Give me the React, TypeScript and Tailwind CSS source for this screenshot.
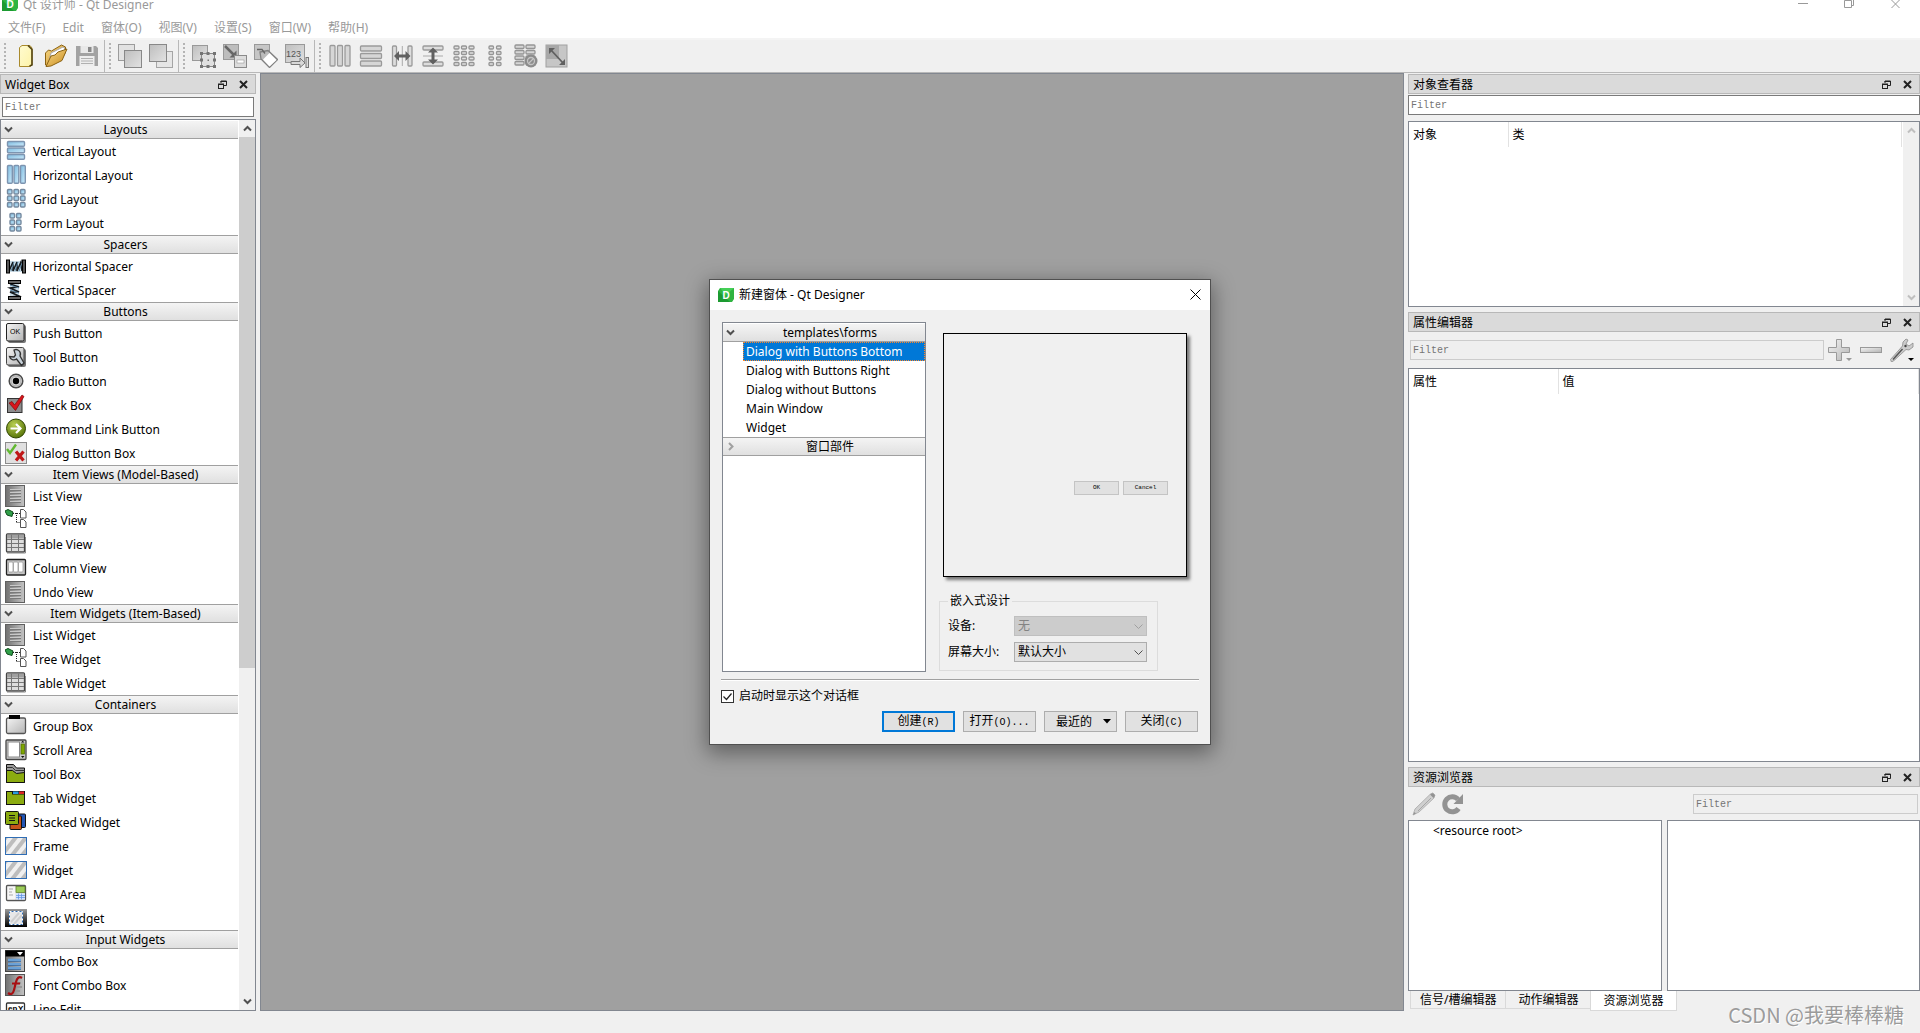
import React, { useState } from 'react';

type IconName =
  | 'vlayout' | 'hlayout' | 'grid' | 'form' | 'hspacer' | 'vspacer'
  | 'push' | 'tool' | 'radio' | 'check' | 'command' | 'dialogbox'
  | 'list' | 'tree' | 'table' | 'column'
  | 'group' | 'scroll' | 'toolbox' | 'tab' | 'stacked' | 'frame' | 'mdi' | 'dock'
  | 'combo' | 'fontcombo' | 'lineedit';

interface Section {
  title: string;
  items: { label: string; icon: IconName }[];
}

const sections: Section[] = [
  {
    title: 'Layouts',
    items: [
      { label: 'Vertical Layout', icon: 'vlayout' },
      { label: 'Horizontal Layout', icon: 'hlayout' },
      { label: 'Grid Layout', icon: 'grid' },
      { label: 'Form Layout', icon: 'form' },
    ],
  },
  {
    title: 'Spacers',
    items: [
      { label: 'Horizontal Spacer', icon: 'hspacer' },
      { label: 'Vertical Spacer', icon: 'vspacer' },
    ],
  },
  {
    title: 'Buttons',
    items: [
      { label: 'Push Button', icon: 'push' },
      { label: 'Tool Button', icon: 'tool' },
      { label: 'Radio Button', icon: 'radio' },
      { label: 'Check Box', icon: 'check' },
      { label: 'Command Link Button', icon: 'command' },
      { label: 'Dialog Button Box', icon: 'dialogbox' },
    ],
  },
  {
    title: 'Item Views (Model-Based)',
    items: [
      { label: 'List View', icon: 'list' },
      { label: 'Tree View', icon: 'tree' },
      { label: 'Table View', icon: 'table' },
      { label: 'Column View', icon: 'column' },
      { label: 'Undo View', icon: 'list' },
    ],
  },
  {
    title: 'Item Widgets (Item-Based)',
    items: [
      { label: 'List Widget', icon: 'list' },
      { label: 'Tree Widget', icon: 'tree' },
      { label: 'Table Widget', icon: 'table' },
    ],
  },
  {
    title: 'Containers',
    items: [
      { label: 'Group Box', icon: 'group' },
      { label: 'Scroll Area', icon: 'scroll' },
      { label: 'Tool Box', icon: 'toolbox' },
      { label: 'Tab Widget', icon: 'tab' },
      { label: 'Stacked Widget', icon: 'stacked' },
      { label: 'Frame', icon: 'frame' },
      { label: 'Widget', icon: 'frame' },
      { label: 'MDI Area', icon: 'mdi' },
      { label: 'Dock Widget', icon: 'dock' },
    ],
  },
  {
    title: 'Input Widgets',
    items: [
      { label: 'Combo Box', icon: 'combo' },
      { label: 'Font Combo Box', icon: 'fontcombo' },
      { label: 'Line Edit', icon: 'lineedit' },
    ],
  },
];

const menus = ['文件(F)', 'Edit', '窗体(O)', '视图(V)', '设置(S)', '窗口(W)', '帮助(H)'];

const templates = [
  'Dialog with Buttons Bottom',
  'Dialog with Buttons Right',
  'Dialog without Buttons',
  'Main Window',
  'Widget',
];

// Shared gradients for all icons
const Gradients = () => (
  <svg className="absolute h-0 w-0" aria-hidden="true">
    <defs>
      <linearGradient id="blue" x1="0" y1="0" x2="1" y2="1">
        <stop offset="0" stopColor="#7dbbe0" />
        <stop offset="1" stopColor="#cdeafa" />
      </linearGradient>
      <linearGradient id="silver" x1="0" y1="0" x2="1" y2="1">
        <stop offset="0" stopColor="#f4f4f4" />
        <stop offset="1" stopColor="#b4b4b4" />
      </linearGradient>
      <linearGradient id="steel" x1="0" y1="0" x2="1" y2="0">
        <stop offset="0" stopColor="#707070" />
        <stop offset="1" stopColor="#c4c4c4" />
      </linearGradient>
      <linearGradient id="grey" x1="0" y1="0" x2="1" y2="1">
        <stop offset="0" stopColor="#bebebe" />
        <stop offset="1" stopColor="#e2e2e2" />
      </linearGradient>
      <linearGradient id="gold" x1="0" y1="0" x2="1" y2="1">
        <stop offset="0" stopColor="#f9dc8c" />
        <stop offset="1" stopColor="#c98a1b" />
      </linearGradient>
      <linearGradient id="paper" x1="0" y1="0" x2="1" y2="1">
        <stop offset="0" stopColor="#fffbd0" />
        <stop offset="1" stopColor="#fdf3a8" />
      </linearGradient>
      <linearGradient id="black" x1="0" y1="0" x2="0" y2="1">
        <stop offset="0" stopColor="#9a9a9a" />
        <stop offset="1" stopColor="#000000" />
      </linearGradient>
      <radialGradient id="green" cx="0.4" cy="0.3" r="0.8">
        <stop offset="0" stopColor="#b9cf52" />
        <stop offset="1" stopColor="#4d6b00" />
      </radialGradient>
      <pattern id="hatch" width="8" height="8" patternUnits="userSpaceOnUse" patternTransform="rotate(38)">
        <rect width="8" height="8" fill="#f0f0f0" />
        <rect width="4" height="8" fill="#bdbdbd" />
      </pattern>
    </defs>
  </svg>
);

const cells = (xs: number[], ys: number[], w: number, h: number) =>
  ys.flatMap(y => xs.map(x => <rect key={`${x}-${y}`} x={x} y={y} width={w} height={h} rx="1" />));

const drawings: Record<IconName, React.ReactNode> = {
  vlayout: <g fill="url(#blue)" stroke="#7d94b0" strokeWidth="1.400">{cells([2.5], [1.5, 8, 14.5], 17, 4.8)}</g>,
  hlayout: <g fill="url(#blue)" stroke="#7d94b0" strokeWidth="1.400">{cells([2.5, 9, 15.5], [1.5], 4.8, 17.8)}</g>,
  grid: <g fill="url(#blue)" stroke="#74899f" strokeWidth="1.400">{cells([2.5, 9, 15.5], [1.5, 8, 14.5], 4.5, 4.5)}</g>,
  form: <g fill="url(#blue)" stroke="#74899f" strokeWidth="1.400">{cells([5, 11.5], [1.5, 8, 14.5], 4.5, 4.5)}</g>,
  hspacer: (
    <g>
      <path d="M4 6h13v11H4z" fill="#c9dbe6" />
      <path d="M4 16L8 7L8 16L12 7L12 16L16 7L17 16" fill="none" stroke="#151a1e" strokeWidth="1.600" />
      <path d="M6 16L9 7M10 16L13 7M14 16L17 8" stroke="#5f87a4" />
      <rect x="1.500" y="5" width="3" height="13" fill="#555" stroke="#000" />
      <rect x="17.500" y="5" width="3" height="13" fill="#555" stroke="#000" />
    </g>
  ),
  vspacer: (
    <g>
      <path d="M5 4h9v14H5z" fill="#c9dbe6" />
      <path d="M5 5L14 8L5 9L14 13L5 13L14 17L5 18" fill="none" stroke="#151a1e" strokeWidth="1.600" />
      <path d="M5 6L14 9M5 11L14 14" stroke="#5f87a4" />
      <rect x="3.500" y="1.500" width="12" height="3" fill="#666" stroke="#000" />
      <rect x="3.500" y="17.500" width="12" height="3" fill="#666" stroke="#000" />
    </g>
  ),
  push: (
    <g>
      <rect x="3" y="3" width="18" height="18" rx="2" fill="#777" />
      <rect x="1.500" y="1.500" width="17.500" height="17.500" rx="1.500" fill="url(#silver)" stroke="#222" />
      <text x="10" y="12" textAnchor="middle" fontSize="7" fontFamily="Liberation Sans">OK</text>
    </g>
  ),
  tool: (
    <g>
      <rect x="3" y="3" width="18" height="18" rx="2" fill="#777" />
      <rect x="1.500" y="1.500" width="17.500" height="17.500" rx="1.500" fill="url(#silver)" stroke="#444" />
      <path
        d="M9 4a4.500 4.500 0 0 1 6 6l4 7-2.500 2.500-5-6.500a4.500 4.500 0 0 1-7-2.500l4.500 0.500 1.500-2z"
        fill="#c8d2da"
        stroke="#333"
        strokeWidth="1.300"
      />
    </g>
  ),
  radio: (
    <g>
      <circle cx="11" cy="11" r="6.800" fill="#d8d8d8" stroke="#4a4a4a" strokeWidth="1.500" />
      <circle cx="11" cy="11" r="5" fill="none" stroke="#aaa" />
      <circle cx="11" cy="11" r="3.200" fill="#000" />
    </g>
  ),
  check: (
    <g>
      <rect x="2.500" y="4.500" width="14.500" height="14" fill="#8c8c8c" stroke="#333" />
      <path d="M4 9l3-1.500 2.500 3.500L17 1l2 1.500L10.500 16.500z" fill="#d8151b" stroke="#7c0709" strokeWidth="0.700" />
    </g>
  ),
  command: (
    <g>
      <circle cx="11" cy="10.500" r="9.500" fill="url(#green)" stroke="#2f4500" />
      <path d="M5.500 10.500h10M11 6L15.500 10.500L11 15" fill="none" stroke="#fff" strokeWidth="2.200" />
    </g>
  ),
  dialogbox: (
    <g>
      <rect x="0.500" y="0.500" width="21" height="21" fill="#e0e0e0" stroke="#8c8c8c" />
      <path d="M2 7l3 4L11 2.500" fill="none" stroke="#62b932" strokeWidth="2.400" />
      <path d="M11 9.500l7.500 9M18.500 9.500L11 18.500" stroke="#c01818" strokeWidth="3.200" />
    </g>
  ),
  list: (
    <g>
      <rect x="0.500" y="0.500" width="19" height="21" fill="url(#steel)" stroke="#606060" />
      <path d="M5 4.500h11M5 7.500h11M5 10.500h11M5 13.500h11M5 16.500h11" stroke="#c8c8c8" />
      <path
        d="M5 5.500h11M5 8.500h11M5 11.500h11M5 14.500h11M5 17.500h11M3 4.500h1M3 7.500h1M3 10.500h1M3 13.500h1M3 16.500h1"
        stroke="#7a7a7a"
      />
    </g>
  ),
  tree: (
    <g>
      <path d="M0 2l3-1.500 5 2.500-1 4.500-5-1.500z" fill="#31a04a" stroke="#0c4d1a" />
      <path d="M8 4.500h8M11.500 4v10M11.500 13.500h5" stroke="#222" strokeDasharray="1 1" />
      <path d="M15.500 0.500h3l2.500 2.500v6h-5.500z" fill="#fff" stroke="#555" />
      <path d="M15.500 10.500h3l2.500 2.500v5.500h-5.500z" fill="#fff" stroke="#555" />
    </g>
  ),
  table: (
    <g>
      <rect x="1.500" y="1" width="18" height="18" rx="1" fill="#dedede" stroke="#444" strokeWidth="1.300" />
      <path d="M2 1.500h17v4H2z" fill="#a0a0a0" />
      <path d="M6.500 1.500v17M13.500 1.500v17M2 6.500h17M2 10.500h17M2 14.500h17" stroke="#777" />
      <path d="M2 20h18.500V4" fill="none" stroke="#888" />
    </g>
  ),
  column: (
    <g>
      <rect x="1.500" y="2.500" width="19" height="15.500" rx="1" fill="#c4c4c4" stroke="#222" strokeWidth="1.300" />
      <g fill="#fff" stroke="#999" strokeWidth="0.800">{cells([3.5, 8.5, 13.5], [5], 4.5, 10)}</g>
    </g>
  ),
  group: (
    <g>
      <rect x="1.500" y="3" width="19" height="15.500" rx="1.500" fill="url(#silver)" stroke="#555" strokeWidth="1.300" />
      <rect x="4" y="0" width="11" height="4" fill="#000" />
    </g>
  ),
  scroll: (
    <g>
      <rect x="1" y="1" width="20" height="19.500" rx="1" fill="#cacaca" stroke="#444" strokeWidth="1.300" />
      <rect x="3" y="3" width="11.500" height="15" fill="#fff" stroke="#888" />
      <rect x="16" y="5" width="3.500" height="10" fill="#7ea600" stroke="#4b6600" strokeWidth="0.700" />
      <path d="M16 3.500h3.500L17.700 1.800zM16 17h3.500l-1.800 2z" fill="#111" />
    </g>
  ),
  toolbox: (
    <g>
      <path d="M1.500 1.500h7l3 3.500h8V19.500h-18z" fill="#9b9b9b" stroke="#111" />
      <path d="M1.500 4.500h6l3 3h9" fill="none" stroke="#333" />
      <path d="M1.500 7.500h6l4 3 8-1v10h-18z" fill="#8bab10" stroke="#111" />
    </g>
  ),
  tab: (
    <g>
      <rect x="1" y="4" width="19" height="14" fill="#111" />
      <rect x="2" y="7.500" width="17" height="9.500" fill="#8bab10" />
      <rect x="2" y="5" width="5" height="4" fill="#8bab10" />
      <rect x="8" y="4.500" width="5.500" height="2.500" fill="#2c9be0" />
      <rect x="14" y="4.500" width="5" height="2.500" fill="#e02424" />
    </g>
  ),
  stacked: (
    <g stroke="#111">
      <rect x="9" y="3" width="11.500" height="13.500" rx="1" fill="#2355b5" />
      <rect x="5" y="5" width="11.500" height="13.500" rx="1" fill="#c4521b" />
      <rect x="0.500" y="0.500" width="13" height="13" rx="1" fill="#8bab10" />
      <path d="M4 4.500h6M4 7h6M4 9.500h6" />
    </g>
  ),
  frame: <rect x="0.500" y="2.500" width="21" height="17" fill="url(#hatch)" stroke="#2f6db5" />,
  mdi: (
    <g>
      <rect x="1.500" y="2.500" width="19" height="15" rx="1" fill="#dcdcdc" stroke="#555" strokeWidth="1.300" />
      <rect x="2.500" y="3.500" width="8" height="13" fill="#f6f6f6" />
      <path d="M4 6h4M4 9h3M4 12h4" stroke="#aaa" />
      <rect x="11" y="3.500" width="9" height="6" fill="#9ccc58" stroke="#567c22" strokeWidth="0.700" />
      <rect x="11" y="10.500" width="9" height="6" fill="#cfe2ff" />
      <path d="M11 12.500h9M11 14.500h9M13.500 10.500v6M16.500 10.500v6" stroke="#5b8fe0" strokeWidth="0.700" />
    </g>
  ),
  dock: (
    <g>
      <rect x="0" y="2" width="22" height="18" fill="url(#black)" />
      <rect x="4.500" y="4.500" width="13" height="13" fill="#e8e8e8" stroke="#2f6db5" />
      <path d="M6 15l8-9M9 17l8-9" stroke="#cfcfcf" strokeWidth="2" />
      <rect x="4.500" y="4.500" width="13" height="13" fill="none" stroke="#fff" strokeDasharray="2 2" />
    </g>
  ),
  combo: (
    <g>
      <rect x="0.500" y="0.500" width="19" height="21" fill="url(#steel)" stroke="#444" />
      <rect x="0.500" y="0.500" width="19" height="6" fill="#000" />
      <path d="M12 2h6l-3 3.500z" fill="#fff" />
      <path d="M3 10h13M3 14h13M3 18h13" stroke="#6aa1d8" strokeWidth="2.500" />
      <path d="M3 11.500h13M3 15.500h13M3 19.500h13" stroke="#31619a" strokeWidth="0.700" />
    </g>
  ),
  fontcombo: (
    <g>
      <rect x="0.500" y="0.500" width="19" height="21" fill="url(#steel)" stroke="#555" />
      <path d="M7 9h9M8 13h9M8 17h7" stroke="#999" strokeWidth="2" />
      <path d="M17 4c-3-2-5 0-6 4l-2 8c-1 4-3 5-6 3M7 9.500h8" fill="none" stroke="#a80f12" strokeWidth="2.200" />
    </g>
  ),
  lineedit: (
    <g>
      <rect x="1.500" y="5" width="18" height="12" rx="1" fill="#fff" stroke="#333" strokeWidth="1.300" />
      <text x="3" y="13" fontSize="8" fontFamily="Liberation Sans" fontWeight="bold">en</text>
      <text x="13" y="13" fontSize="8" fontFamily="Liberation Sans" fontWeight="bold">Y</text>
    </g>
  ),
};

const WidgetIcon = ({ name }: { name: IconName }) => (
  <svg width="22" height="22" viewBox="0 0 22 22" className="shrink-0" aria-hidden="true">
    {drawings[name]}
  </svg>
);

const toolGroups: { label: string; art: React.ReactNode }[][] = [
  [
    {
      label: 'New',
      art: (
        <g>
          <path d="M6.500 3.500L9 1.500h8l2 2.500v17l-2 1.500H6.500z" fill="url(#paper)" stroke="#a98a2c" />
          <path d="M15 1.500l4 4v15.500l-2.500 1" fill="none" stroke="#4f4010" strokeWidth="1.500" />
        </g>
      ),
    },
    {
      label: 'Open',
      art: (
        <g stroke="#8b6212" strokeLinejoin="round">
          <path d="M1.500 21V9l3-3 3 1 10-6 4 2v6L4 22z" fill="url(#gold)" />
          <path d="M5 17L7 9l12-6 1.500 1v7L6 20z" fill="#fff" stroke="#aaa" />
          <path d="M2 22.500L7 12l4-1 3-3 9-3-5 11.500L7 22z" fill="url(#gold)" />
        </g>
      ),
    },
    {
      label: 'Save',
      art: (
        <g>
          <path d="M1 2h20l2 2v18H1z" fill="#a2a2a2" />
          <rect x="5.500" y="2" width="13" height="7" fill="#e8e8e8" />
          <rect x="13" y="3" width="3.500" height="5" fill="#888" />
          <rect x="4.500" y="12" width="15" height="10" fill="#ededed" />
          <path d="M6 14.500h12M6 17h12M6 19.500h12" stroke="#b0b0b0" />
        </g>
      ),
    },
  ],
  [
    {
      label: 'Bring to front',
      art: (
        <g stroke="#9b9b9b">
          <rect x="0.500" y="0.500" width="16" height="16" fill="#e2e2e2" />
          <rect x="6.500" y="6.500" width="17" height="17" fill="url(#grey)" stroke="#888" />
        </g>
      ),
    },
    {
      label: 'Send to back',
      art: (
        <g stroke="#a5a5a5">
          <rect x="7.500" y="7.500" width="16" height="16" fill="#e6e6e6" />
          <rect x="0.500" y="0.500" width="17" height="17" fill="url(#grey)" stroke="#888" />
        </g>
      ),
    },
  ],
  [
    {
      label: 'Edit Widgets',
      art: (
        <g>
          <rect x="0.500" y="1.500" width="15" height="15" fill="url(#grey)" stroke="#999" />
          <rect x="9.500" y="9.500" width="13" height="13" fill="#e0e0e0" stroke="#8a8a8a" />
          <path
            d="M8 8h3v3H8zM14.500 8h3v3h-3zM21 8h3v3h-3zM8 14.500h3v3H8zM21 14.500h3v3h-3zM8 21h3v3H8zM14.500 21h3v3h-3zM21 21h3v3h-3zM15.500 15.500h1.500v1.500h-1.500z"
            fill="#747474"
          />
        </g>
      ),
    },
    {
      label: 'Edit Signals/Slots',
      art: (
        <g>
          <rect x="0.500" y="0.500" width="15" height="15" fill="#bdbdbd" stroke="#999" />
          <path d="M2 2l9 9" stroke="#666" strokeWidth="2.500" />
          <path d="M13.500 13.500V6.500l-7 7z" fill="#666" />
          <rect x="11.500" y="11.500" width="12" height="12" fill="#dcdcdc" stroke="#8a8a8a" />
          <rect x="14" y="16" width="7" height="3" fill="#fff" stroke="#888" strokeWidth="0.500" />
        </g>
      ),
    },
    {
      label: 'Edit Buddies',
      art: (
        <g>
          <rect x="0.500" y="0.500" width="15" height="15" fill="#c6c6c6" stroke="#999" />
          <path d="M6 8l8-1.500 9.500 9-8 8L7 15z" fill="#bbb" stroke="#808080" strokeWidth="1.300" />
          <path d="M15.500 9l7 7-7 6.500-6.500-7z" fill="#fff" />
          <path d="M3 5.500h5l3 4" fill="none" stroke="#666" strokeWidth="1.300" />
        </g>
      ),
    },
    {
      label: 'Edit Tab Order',
      art: (
        <g>
          <rect x="0.500" y="0.500" width="19" height="18" fill="url(#grey)" stroke="#999" />
          <text x="1" y="13" fontSize="9" fontFamily="Liberation Sans" fill="#555">123</text>
          <path d="M6 17.500h9V14l5 5-5 4.500v-3H6z" fill="#d8d8d8" stroke="#777" />
          <rect x="21" y="13.500" width="2.500" height="10" fill="#ddd" stroke="#777" />
        </g>
      ),
    },
  ],
  [
    { label: 'Lay Out Horizontally', art: <g fill="#d6d6d6" stroke="#9a9a9a" strokeWidth="1.300">{cells([2, 9.5, 17], [1.5], 5, 20.5)}</g> },
    { label: 'Lay Out Vertically', art: <g fill="#d6d6d6" stroke="#9a9a9a" strokeWidth="1.300">{cells([1.5], [2, 9.5, 17], 21, 5)}</g> },
    {
      label: 'Lay Out Horizontally in Splitter',
      art: (
        <g>
          <g fill="#ddd" stroke="#9a9a9a" strokeWidth="1.300">{cells([2.5, 18], [2], 4, 20)}</g>
          <path d="M12.300 2v20" stroke="#aaa" />
          <path d="M4 12l5-5v3.500h6.500V7l5 5-5 5v-3.500H9V17z" fill="#606060" />
        </g>
      ),
    },
    {
      label: 'Lay Out Vertically in Splitter',
      art: (
        <g>
          <g fill="#ddd" stroke="#9a9a9a" strokeWidth="1.300">{cells([2], [2, 18], 20, 4)}</g>
          <path d="M2 12h20" stroke="#aaa" />
          <path d="M12 3.500l5 5h-3.500v7H17l-5 5-5-5h3.500v-7H7z" fill="#606060" />
        </g>
      ),
    },
    { label: 'Lay Out in a Grid', art: <g fill="#e0e0e0" stroke="#959595" strokeWidth="1.300">{cells([2, 9.5, 17], [2, 7.5, 13, 18.5], 5, 3)}</g> },
    { label: 'Lay Out in a Form Layout', art: <g fill="#e0e0e0" stroke="#959595" strokeWidth="1.300">{cells([6, 13.5], [2, 7.5, 13, 18.5], 4.5, 3)}</g> },
    {
      label: 'Break Layout',
      art: (
        <g>
          <g fill="#d6d6d6" stroke="#959595" strokeWidth="1.300">{cells([1, 12], [1, 6.5, 12, 17.5], 9, 3.5)}</g>
          <circle cx="17" cy="17" r="6.500" fill="#8c8c8c" />
          <circle cx="17" cy="17" r="3.500" fill="none" stroke="#c4c4c4" strokeWidth="1.300" />
          <path d="M14.500 19.500l5-5" stroke="#c4c4c4" strokeWidth="1.300" />
        </g>
      ),
    },
    {
      label: 'Adjust Size',
      art: (
        <g>
          <rect x="1" y="1" width="21" height="22" fill="#c6c6c6" stroke="#a0a0a0" />
          <rect x="1" y="1" width="13" height="14" fill="#a8a8a8" />
          <path d="M6 6l12 13" stroke="#606060" strokeWidth="1.800" />
          <path d="M4 4h6l-6 6zM20 21h-6l6-6z" fill="#606060" />
        </g>
      ),
    },
  ],
];

const AppLogo = () => (
  <svg width="16" height="14" viewBox="0 0 16 14" className="shrink-0" aria-hidden="true">
    <path d="M2 0h14v11l-2 3H0V3z" fill="#2fb441" />
    <path d="M2 0h14L8 7z" fill="#45cf57" />
    <path d="M0 3v11h12z" fill="#1c9a31" />
    <text x="8" y="11" textAnchor="middle" fontSize="10" fontWeight="bold" fontFamily="Liberation Sans" fill="#fff">D</text>
  </svg>
);

const Chevron = ({ dir, color = '#505050' }: { dir: 'up' | 'down' | 'right'; color?: string }) => (
  <svg width="9" height="9" viewBox="0 0 9 9" fill="none" stroke={color} strokeWidth="2" className="shrink-0" aria-hidden="true">
    {dir === 'up' && <path d="M1 6.500L4.500 3L8 6.500" />}
    {dir === 'down' && <path d="M1 2.500L4.500 6L8 2.500" />}
    {dir === 'right' && <path d="M3 1L6.500 4.500L3 8" />}
  </svg>
);

const DockTitle = ({ title }: { title: string }) => (
  <div className="flex h-5 shrink-0 items-center border border-[#b8b8b8] bg-[#dadada] pl-1 pr-[7px]">
    <h2 className="flex-1 pt-px">{title}</h2>
    <button aria-label="Float" className="mr-3">
      <svg width="9" height="9" viewBox="0 0 9 9" fill="none" stroke="#222">
        <path d="M3 3V1h5.500v4.500H6M2.500 1.500h6" />
        <rect x="0.500" y="4" width="5" height="4.500" />
        <path d="M0.500 4.500h5" />
      </svg>
    </button>
    <button aria-label="Close">
      <svg width="9" height="9" viewBox="0 0 9 9" stroke="#222" strokeWidth="2">
        <path d="M1 1l7 7M8 1l-7 7" />
      </svg>
    </button>
  </div>
);

const FilterInput = ({ label, muted, className }: { label: string; muted?: boolean; className?: string }) => (
  <input
    type="text"
    aria-label={label}
    placeholder="Filter"
    className={`h-5 border px-0.5 pt-px font-['Liberation_Mono',monospace] text-[10px] outline-none placeholder:text-[#757575] ${
      muted ? 'border-[#cccccc] bg-[#efefef]' : 'border-[#7a7a7a] bg-white'
    } ${className ?? ''}`}
  />
);

const CategoryHeader = ({ title, open, first, onClick }: { title: string; open: boolean; first?: boolean; onClick?: () => void }) => (
  <button
    onClick={onClick}
    aria-expanded={open}
    className={`flex h-[19px] w-full shrink-0 items-center border-b border-[#a0a0a0] border-t bg-linear-to-b from-[#f4f4f4] to-[#e0e0e0] pl-[3px] ${
      first ? 'border-t-white' : ''
    }`}
  >
    <Chevron dir={open ? 'down' : 'right'} color={open ? '#505050' : '#a0a0a0'} />
    <span className="flex-1 text-center">{title}</span>
  </button>
);

const WidgetBox = () => {
  const [closed, setClosed] = useState<string[]>([]);

  const toggle = (title: string) =>
    setClosed(prev => (prev.includes(title) ? prev.filter(t => t !== title) : [...prev, title]));

  return (
    <aside className="flex w-64 shrink-0 flex-col pt-px">
      <DockTitle title="Widget Box" />
      <FilterInput label="Filter widgets" className="mx-0.5 mt-[3px] mb-0.5" />
      <div className="flex min-h-0 flex-1 border border-[#828790] bg-white">
        <div className="mr-px h-full flex-1 overflow-hidden">
          {sections.map((section, i) => (
            <div key={section.title}>
              <CategoryHeader
                title={section.title}
                first={i === 0}
                open={!closed.includes(section.title)}
                onClick={() => toggle(section.title)}
              />
              {!closed.includes(section.title) && (
                <ul>
                  {section.items.map(item => (
                    <li key={item.label} className="flex h-6 items-center gap-1.5 pl-1">
                      <WidgetIcon name={item.icon} />
                      <span className="pt-0.5">{item.label}</span>
                    </li>
                  ))}
                </ul>
              )}
            </div>
          ))}
        </div>
        <div className="flex w-4 shrink-0 flex-col items-center bg-[#f0f0f0]">
          <div className="flex h-[17px] items-center"><Chevron dir="up" /></div>
          <div className="w-full flex-1">
            <div className="h-[62%] w-full bg-[#cdcdcd]" />
          </div>
          <div className="flex h-[17px] items-center"><Chevron dir="down" /></div>
        </div>
      </div>
    </aside>
  );
};

const HeaderTable = ({ first, second, firstWidth }: { first: string; second: string; firstWidth: string }) => (
  <table className="h-[25px] w-full table-fixed text-left">
    <thead>
      <tr>
        <th className={`border-r border-[#e2e2e2] pl-1 font-normal ${firstWidth}`}>{first}</th>
        <th className="border-r border-[#e2e2e2] pl-1 font-normal">{second}</th>
      </tr>
    </thead>
  </table>
);

const ObjectInspector = () => (
  <section className="flex min-h-0 flex-col">
    <DockTitle title="对象查看器" />
    <FilterInput label="Filter objects" className="mt-px" />
    <div className="mt-1.5 flex min-h-0 flex-1 border border-[#828790] bg-white">
      <div className="flex-1">
        <HeaderTable first="对象" second="类" firstWidth="w-[99px]" />
      </div>
      <div className="ml-px flex w-4 flex-col items-center justify-between bg-[#f0f0f0] py-1">
        <Chevron dir="up" color="#bfbfbf" />
        <Chevron dir="down" color="#bfbfbf" />
      </div>
    </div>
  </section>
);

const PropertyEditor = () => (
  <section className="flex min-h-0 flex-col">
    <DockTitle title="属性编辑器" />
    <div className="flex h-9 shrink-0 items-center gap-1 pl-0.5 pr-1.5">
      <FilterInput label="Filter properties" muted className="flex-1" />
      <div className="flex gap-[7px]">
        <button aria-label="Add Dynamic Property">
          <svg width="24" height="24" viewBox="0 0 24 24">
            <path d="M8.500 1.500h5v8h8v5h-8v8h-5v-8h-8v-5h8z" fill="url(#silver)" stroke="#9a9a9a" />
            <path d="M18 20h6l-3 3z" fill="#999" />
          </svg>
        </button>
        <button aria-label="Remove Dynamic Property">
          <svg width="24" height="24" viewBox="0 0 24 24">
            <rect x="1.500" y="9.500" width="21" height="5" fill="url(#silver)" stroke="#9a9a9a" />
          </svg>
        </button>
        <button aria-label="Configure Property Editor">
          <svg width="24" height="24" viewBox="0 0 24 24">
            <path
              d="M16 1l2 1-2 4 3 2 4-3v4l-4 3-3-0.500L4 22.500 1.500 24 0.500 21.500 12.500 8 13 4z"
              fill="#cccccc"
              stroke="#8a8a8a"
              strokeWidth="0.800"
            />
            <path d="M3 21.500L12.500 11" stroke="#555" strokeWidth="1.500" />
            <circle cx="15.500" cy="8" r="1.200" fill="#444" />
            <path d="M18 20h6l-3 3z" fill="#000" />
          </svg>
        </button>
      </div>
    </div>
    <div className="min-h-0 flex-1 border border-[#828790] bg-white">
      <HeaderTable first="属性" second="值" firstWidth="w-[149px]" />
    </div>
  </section>
);

const ResourceBrowser = () => (
  <section className="flex min-h-0 flex-col">
    <DockTitle title="资源浏览器" />
    <div className="flex h-[33px] shrink-0 items-center gap-1.5 pl-1 pr-0.5">
      <button aria-label="Edit Resources">
        <svg width="24" height="24" viewBox="0 0 24 24">
          <path d="M1 23l2-6L18.500 2l2-1 2.500 2-1 3L7 20z" fill="#cfcfcf" stroke="#b4b4b4" />
          <path d="M18 2.500l3.500 3.500 1.500-2.500-2-2.500zM1 23l1.500-3 1.500 1.500z" fill="#929292" />
          <path d="M6 19L19 6" stroke="#a6a6a6" />
        </svg>
      </button>
      <button aria-label="Reload">
        <svg width="22" height="22" viewBox="0 0 22 22">
          <path d="M16.500 15.500A7.500 7.500 0 1 1 16 6.500" fill="none" stroke="#939393" strokeWidth="5" />
          <path d="M21 1v10h-9.500z" fill="#939393" />
        </svg>
      </button>
      <FilterInput label="Filter resources" muted className="ml-auto w-[225px]" />
    </div>
    <div className="grid min-h-0 flex-1 grid-cols-2 gap-[5px]">
      <div className="border border-[#828790] bg-white pl-6 pt-0.5">&lt;resource root&gt;</div>
      <div className="border border-[#828790] bg-white" />
    </div>
    <div className="flex h-5 shrink-0 items-start pl-0.5" role="tablist">
      <button role="tab" className="h-[18px] border border-t-0 border-[#d9d9d9] px-[9px]">信号/槽编辑器</button>
      <button role="tab" className="h-[18px] border border-x-0 border-t-0 border-[#d9d9d9] px-3">动作编辑器</button>
      <button role="tab" aria-selected="true" className="h-5 border border-t-0 border-[#d9d9d9] bg-white px-3">资源浏览器</button>
    </div>
  </section>
);

const Mono = ({ children }: { children: React.ReactNode }) => (
  <span className="font-['Liberation_Mono',monospace] text-[10px]">{children}</span>
);

const DeviceSelect = ({ id, label, value, disabled }: { id: string; label: string; value: string; disabled?: boolean }) => (
  <div className="flex items-center">
    <label htmlFor={id} className="w-[66px]">{label}</label>
    <div className="relative w-[133px]">
      <select
        id={id}
        disabled={disabled}
        className="block h-5 w-full appearance-none border border-[#adadad] bg-[#e1e1e1] pl-[3px] leading-[18px] disabled:border-[#bfbfbf] disabled:bg-[#cccccc] disabled:text-[#838383] disabled:opacity-100"
      >
        <option>{value}</option>
      </select>
      <svg width="9" height="6" viewBox="0 0 9 6" className="absolute right-1 top-2" fill="none" stroke={disabled ? '#a0a0a0' : '#505050'}>
        <path d="M0.500 0.500l4 4 4-4" />
      </svg>
    </div>
  </div>
);

const NewFormDialog = () => {
  const [selected, setSelected] = useState(templates[0]);

  return (
    <div
      role="dialog"
      aria-labelledby="new-form-title"
      className="flex h-[466px] w-[502px] flex-col border border-[#505050] bg-[#f0f0f0] shadow-[0_6px_20px_2px_rgba(0,0,0,0.4)]"
    >
      <div className="flex h-[30px] shrink-0 items-center gap-[5px] bg-white pl-2 pr-[9px] pb-px">
        <AppLogo />
        <h1 id="new-form-title" className="flex-1">新建窗体 - Qt Designer</h1>
        <button aria-label="Close">
          <svg width="11" height="11" viewBox="0 0 11 11" stroke="#000">
            <path d="M0.500 0.500l10 10M10.500 0.500l-10 10" />
          </svg>
        </button>
      </div>

      <div className="flex flex-1 px-3 pt-3">
        {/* Template list */}
        <div className="h-[350px] w-[204px] border border-[#828790] bg-white">
          <CategoryHeader title="templates\forms" first open />
          <ul>
            {templates.map(name => (
              <li key={name} className="pl-5">
                <button
                  onClick={() => setSelected(name)}
                  className={`flex h-[19px] w-full items-center border border-dotted pl-0.5 ${
                    selected === name ? 'border-[#ff8728] bg-[#0078d7] text-white' : 'border-transparent'
                  }`}
                >
                  {name}
                </button>
              </li>
            ))}
          </ul>
          <CategoryHeader title="窗口部件" open={false} />
        </div>

        <div className="ml-[13px]">
          {/* Form preview */}
          <div className="ml-1 mt-[11px] flex h-[244px] w-[244px] items-end justify-end gap-1 border border-black bg-[#f0f0f0] pb-[81px] pr-[18px] shadow-[3px_3px_3px_rgba(0,0,0,0.5)]">
            <span className="flex h-[14px] w-[45px] items-center justify-center border border-[#c4c4c4] bg-[#e1e1e1] font-['Liberation_Mono',monospace] text-[6px]">OK</span>
            <span className="flex h-[14px] w-[45px] items-center justify-center border border-[#c4c4c4] bg-[#e1e1e1] font-['Liberation_Mono',monospace] text-[6px]">Cancel</span>
          </div>

          <fieldset className="mt-4 flex h-[78px] w-[219px] flex-col gap-1.5 border border-[#dcdcdc] pl-2 pt-[7px]">
            <legend className="px-0.5">嵌入式设计</legend>
            <DeviceSelect id="device" label="设备:" value="无" disabled />
            <DeviceSelect id="screen-size" label="屏幕大小:" value="默认大小" />
          </fieldset>
        </div>
      </div>

      <div className="mx-[11px] border-b border-t border-b-white border-t-[#a0a0a0]" />

      <label className="mt-[7px] flex items-center gap-[5px] pl-[11px] leading-4">
        <span className="relative h-[13px] w-[13px]">
          <input type="checkbox" defaultChecked className="peer block h-[13px] w-[13px] appearance-none border border-[#333333] bg-white" />
          <svg width="13" height="13" viewBox="0 0 13 13" className="pointer-events-none absolute inset-0 hidden peer-checked:block" fill="none" stroke="#222">
            <path d="M2.500 6.500l3 3 5-6" strokeWidth="1.200" />
          </svg>
        </span>
        启动时显示这个对话框
      </label>

      <div className="mt-[7px] mb-3 flex justify-end gap-2 pr-3">
        <button className="h-[21px] w-[73px] border-2 border-[#0078d7] bg-[#e1e1e1] leading-4">创建<Mono>(R)</Mono></button>
        <button className="h-[21px] w-[73px] border border-[#adadad] bg-[#e1e1e1] leading-4">打开<Mono>(O)...</Mono></button>
        <button className="flex h-[21px] w-[73px] items-center justify-between border border-[#adadad] bg-[#e1e1e1] pl-[11px] pr-[5px] leading-4">
          最近的
          <svg width="8" height="5" viewBox="0 0 8 5"><path d="M0 0h8L4 4.500z" /></svg>
        </button>
        <button className="h-[21px] w-[73px] border border-[#adadad] bg-[#e1e1e1] leading-4">关闭<Mono>(C)</Mono></button>
      </div>
    </div>
  );
};

const App: React.FC = () => (
  <div className="relative flex h-screen flex-col overflow-hidden bg-[#f0f0f0] font-['Noto_Sans','Noto_Sans_CJK_SC',sans-serif] text-xs leading-4 text-black">
    <Gradients />

    {/* Title bar */}
    <header className="flex h-[18px] shrink-0 items-start bg-white pl-0.5 text-[#999999]">
      <div className="flex h-[11px] flex-1 items-end gap-[5px]">
        <AppLogo />
        <span className="leading-3">Qt 设计师 - Qt Designer</span>
      </div>
      <div className="flex pr-0.5">
        <button aria-label="Minimize" className="flex w-[46px] justify-center">
          <svg width="11" height="9" viewBox="0 0 11 9" stroke="#999"><path d="M0 3.500h10" /></svg>
        </button>
        <button aria-label="Restore" className="flex w-[46px] justify-center">
          <svg width="11" height="9" viewBox="0 0 11 9" fill="none" stroke="#999"><path d="M0.500 0.500h7v7h-7zM9.500 0v5.500H8" /></svg>
        </button>
        <button aria-label="Close" className="flex w-[46px] justify-center">
          <svg width="11" height="9" viewBox="0 0 11 9" stroke="#999"><path d="M1.500 0l8 8M9.500 0l-8 8" /></svg>
        </button>
      </div>
    </header>

    <nav className="flex h-[22px] shrink-0 gap-px border-b-2 border-[#f4f4f4] bg-white text-[#999999]">
      {menus.map(menu => (
        <button key={menu} className="px-2">{menu}</button>
      ))}
    </nav>

    {/* Toolbars */}
    <div className="flex h-[33px] shrink-0 border-b border-[#b8b8b8]">
      {toolGroups.map((group, i) => (
        <div key={i} className={`flex items-center ${i < toolGroups.length - 1 ? 'border-r border-[#b8b8b8] pr-0.5' : ''}`}>
          <div className="ml-1 mr-[3px] h-[26px] w-0.5 border-l-2 border-dotted border-[#b4b4b4]" />
          {group.map(action => (
            <button key={action.label} aria-label={action.label} title={action.label} className="flex w-[31px] justify-center">
              <svg width="24" height="24" viewBox="0 0 24 24">{action.art}</svg>
            </button>
          ))}
        </div>
      ))}
    </div>

    <div className="flex min-h-0 flex-1 gap-1">
      <WidgetBox />
      <main className="flex-1 border border-[#828790] bg-[#a0a0a0]" />
      <div className="grid w-[512px] shrink-0 grid-rows-[233fr_450fr_244fr] gap-[5px] pt-px">
        <ObjectInspector />
        <PropertyEditor />
        <ResourceBrowser />
      </div>
    </div>
    <footer className="h-[22px] shrink-0" />

    {/* The dialog floats over the workspace */}
    <div className="pointer-events-none absolute inset-0 flex items-center justify-center pb-[9px]">
      <div className="pointer-events-auto">
        <NewFormDialog />
      </div>
    </div>

    <div className="absolute bottom-1 right-4 font-['Noto_Sans_CJK_SC',sans-serif] text-xl text-[#9b9b9b] [text-shadow:1px_1px_0_#ffffff]">
      CSDN @我要棒棒糖
    </div>
  </div>
);

export default App;
